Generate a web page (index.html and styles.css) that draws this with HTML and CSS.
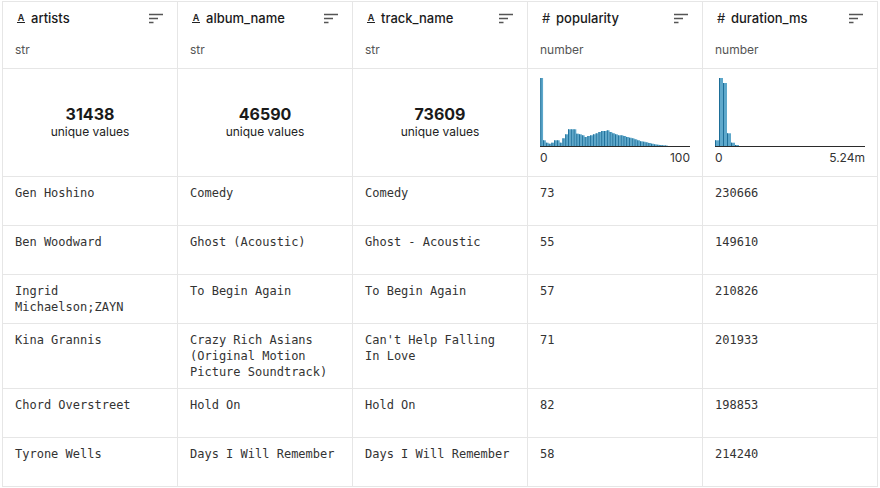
FILE: index.html
```html
<!DOCTYPE html>
<html>
<head>
<meta charset="utf-8">
<link rel="stylesheet" href="styles.css">
</head>
<body>
<div class="table">
  <!-- header -->
  <div class="cell head">
    <div class="name-row"><span class="ico ico-str">A</span><span class="name">artists</span><svg class="sort" width="14" height="12" viewBox="0 0 14 12"><path d="M0 2.5H14M0 6.5H9M0 10.5H4.5"/></svg></div>
    <div class="type">str</div>
  </div>
  <div class="cell head">
    <div class="name-row"><span class="ico ico-str">A</span><span class="name">album_name</span><svg class="sort" width="14" height="12" viewBox="0 0 14 12"><path d="M0 2.5H14M0 6.5H9M0 10.5H4.5"/></svg></div>
    <div class="type">str</div>
  </div>
  <div class="cell head">
    <div class="name-row"><span class="ico ico-str">A</span><span class="name">track_name</span><svg class="sort" width="14" height="12" viewBox="0 0 14 12"><path d="M0 2.5H14M0 6.5H9M0 10.5H4.5"/></svg></div>
    <div class="type">str</div>
  </div>
  <div class="cell head">
    <div class="name-row"><span class="ico ico-num">#</span><span class="name">popularity</span><svg class="sort" width="14" height="12" viewBox="0 0 14 12"><path d="M0 2.5H14M0 6.5H9M0 10.5H4.5"/></svg></div>
    <div class="type">number</div>
  </div>
  <div class="cell head">
    <div class="name-row"><span class="ico ico-num">#</span><span class="name">duration_ms</span><svg class="sort" width="14" height="12" viewBox="0 0 14 12"><path d="M0 2.5H14M0 6.5H9M0 10.5H4.5"/></svg></div>
    <div class="type">number</div>
  </div>

  <!-- summary -->
  <div class="cell summary"><div class="big">31438</div><div class="small">unique values</div></div>
  <div class="cell summary"><div class="big">46590</div><div class="small">unique values</div></div>
  <div class="cell summary"><div class="big">73609</div><div class="small">unique values</div></div>
  <div class="cell hist">
    <svg class="chart" width="150" height="69" viewBox="0 0 150 69" id="pop"></svg>
    <div class="axis"><span>0</span><span>100</span></div>
  </div>
  <div class="cell hist">
    <svg class="chart" width="150" height="69" viewBox="0 0 150 69" id="dur"></svg>
    <div class="axis"><span>0</span><span>5.24m</span></div>
  </div>

  <!-- data rows -->
  <div class="cell data">Gen Hoshino</div>
  <div class="cell data">Comedy</div>
  <div class="cell data">Comedy</div>
  <div class="cell data">73</div>
  <div class="cell data">230666</div>

  <div class="cell data">Ben Woodward</div>
  <div class="cell data">Ghost (Acoustic)</div>
  <div class="cell data">Ghost - Acoustic</div>
  <div class="cell data">55</div>
  <div class="cell data">149610</div>

  <div class="cell data">Ingrid Michaelson;ZAYN</div>
  <div class="cell data">To Begin Again</div>
  <div class="cell data">To Begin Again</div>
  <div class="cell data">57</div>
  <div class="cell data">210826</div>

  <div class="cell data">Kina Grannis</div>
  <div class="cell data">Crazy Rich Asians (Original Motion Picture Soundtrack)</div>
  <div class="cell data">Can't Help Falling In Love</div>
  <div class="cell data">71</div>
  <div class="cell data">201933</div>

  <div class="cell data">Chord Overstreet</div>
  <div class="cell data">Hold On</div>
  <div class="cell data">Hold On</div>
  <div class="cell data">82</div>
  <div class="cell data">198853</div>

  <div class="cell data">Tyrone Wells</div>
  <div class="cell data">Days I Will Remember</div>
  <div class="cell data">Days I Will Remember</div>
  <div class="cell data">58</div>
  <div class="cell data">214240</div>
</div>
<script src="script.js"></script>
</body>
</html>
```

FILE: styles.css
```css
* { box-sizing: border-box; }
body {
  margin: 0;
  background: #ffffff;
  font-family: Inter, "Noto Sans", sans-serif;
  color: #1a1a1a;
}
.table {
  display: grid;
  grid-template-columns: repeat(5, 175px);
  margin: 1px 0 0 2px;
  border-left: 1px solid #e6e6e6;
  border-top: 1px solid #e6e6e6;
  width: max-content;
}
.cell {
  border-right: 1px solid #e6e6e6;
  border-bottom: 1px solid #e6e6e6;
}
.head {
  padding: 8px 14px 10px 12px;
  display: flex;
  flex-direction: column;
  gap: 16px;
}
.name-row {
  display: flex;
  align-items: center;
  height: 16px;
}
.ico {
  width: 12px;
  margin-right: 4px;
  display: flex;
  justify-content: center;
  color: #222;
}
.ico-str {
  font-size: 9px;
  font-weight: 600;
  line-height: 9px;
  border-bottom: 1.2px solid #222;
  width: 8px;
  margin: 0 6px 0 2px;
  padding-bottom: 0;
}
.ico-num {
  font-size: 13px;
  font-weight: 400;
  line-height: 16px;
}
.name {
  font-size: 13px;
  font-weight: 500;
  line-height: 16px;
  flex: 1;
  color: #1a1a1a;
}
.sort { display: block; }
.sort path {
  stroke: #555;
  stroke-width: 1.5;
  fill: none;
}
.type {
  font-size: 12px;
  line-height: 16px;
  color: #555;
}
.summary {
  height: 108px;
  display: flex;
  flex-direction: column;
  align-items: center;
  justify-content: center;
  padding-bottom: 2px;
}
.big {
  font-size: 16px;
  font-weight: 700;
  line-height: 20px;
  color: #1a1a1a;
}
.small {
  font-size: 12px;
  line-height: 15px;
  color: #222;
}
.hist {
  height: 108px;
  padding: 9px 12px 0 12px;
}
.chart { display: block; }
.axis {
  display: flex;
  justify-content: space-between;
  font-size: 12px;
  line-height: 16px;
  margin-top: 3px;
  color: #333;
}
.data {
  padding: 8px 12px;
  min-height: 49px;
  font-family: "DejaVu Sans Mono", "Liberation Mono", monospace;
  font-size: 12px;
  line-height: 16px;
  color: #333;
}
```

FILE: script.js
```js
(function () {
  var NS = "http://www.w3.org/2000/svg";
  function draw(id, heights, pitch, offset) {
    var svg = document.getElementById(id);
    heights.forEach(function (h, i) {
      if (h <= 0) return;
      var x = offset + i * pitch;
      var r = document.createElementNS(NS, "rect");
      r.setAttribute("x", x);
      r.setAttribute("y", 68 - h);
      r.setAttribute("width", pitch);
      r.setAttribute("height", h);
      r.setAttribute("fill", "#5ea8cb");
      svg.appendChild(r);
      var d = document.createElementNS(NS, "rect");
      d.setAttribute("x", x);
      d.setAttribute("y", 68 - h);
      d.setAttribute("width", Math.min(1, pitch / 3));
      d.setAttribute("height", h);
      d.setAttribute("fill", "#1d6e98");
      svg.appendChild(d);
    });
    var base = document.createElementNS(NS, "rect");
    base.setAttribute("x", 0);
    base.setAttribute("y", 68);
    base.setAttribute("width", 150);
    base.setAttribute("height", 1);
    base.setAttribute("fill", "#2b2b2b");
    svg.appendChild(base);
  }
  var pop = [68, 5.7, 3.3, 2.3, 3.3, 5.7, 5.7, 3.3, 7.7, 11.7, 16.7, 16.7, 16.7, 12.3, 11.7, 10.7, 9, 10, 10.7, 11.7, 12.7, 14, 15, 15, 15.7, 14, 12.7, 11.7, 10.7, 10.7, 10, 9, 8.3, 7.7, 6.7, 5.7, 4.7, 4.3, 3.7, 3, 2.3, 1.7, 1.3, 1, 0.7, 0.5];
  draw("pop", pop, 2.77, 0.3);
  var dur = [5.7, 68, 63, 12.7, 3.3, 1];
  draw("dur", dur, 4, 0);
})();
```
